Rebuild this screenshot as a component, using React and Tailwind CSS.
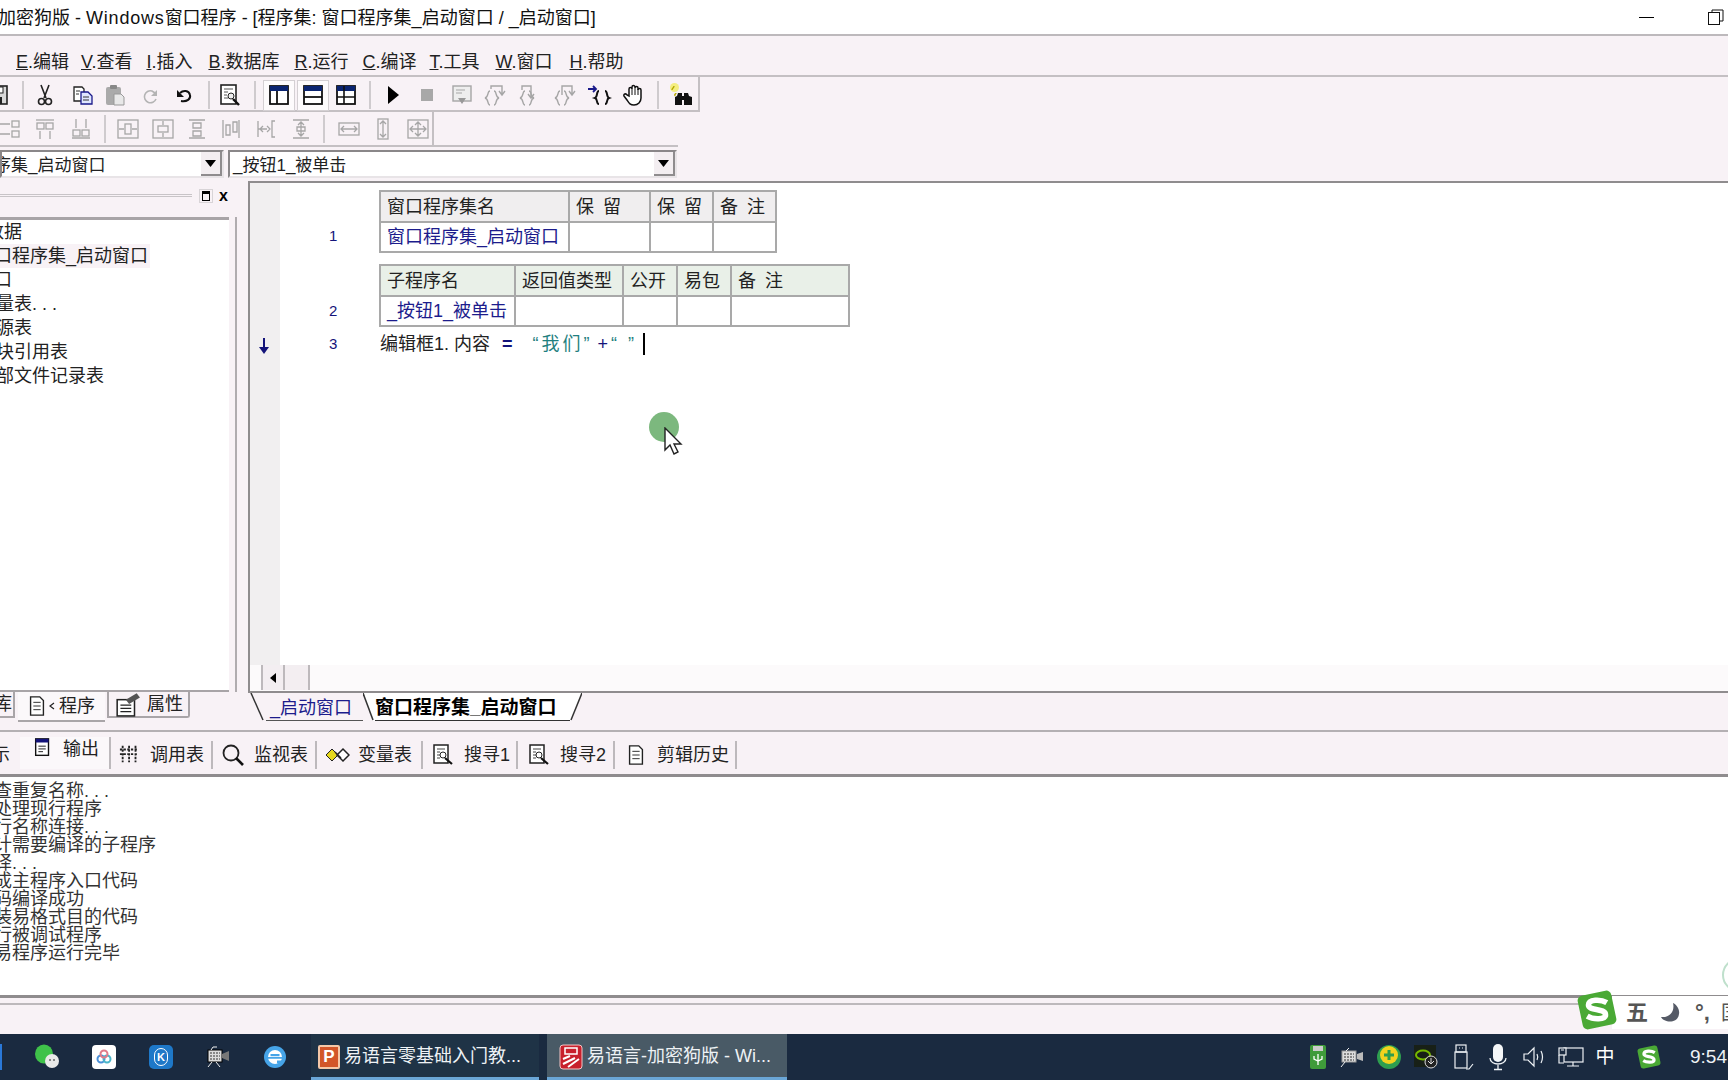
const Ico = ({ className = "", size = 24, children, vb = "0 0 24 24" }) => (
  <svg viewBox={vb} width={size} height={size} fill="none" className={`shrink-0 ${className}`}>
    {children}
  </svg>
);

const GRAY = "#a6a6a6";

// main toolbar drawings
const SaveIcon = ({ className }) => (
  <Ico className={className}>
    <rect x="3" y="3" width="18" height="18" fill="#d8d8d8" stroke="#222" strokeWidth="1.6" />
    <rect x="7" y="4" width="10" height="6" fill="#fff" stroke="#222" />
    <rect x="8" y="14" width="8" height="7" fill="#222" />
  </Ico>
);
const ScissorsIcon = ({ className }) => (
  <Ico className={className}>
    <path d="M8 2l5 13M16 2l-5 13" stroke="#222" strokeWidth="1.6" />
    <circle cx="8.500" cy="18.500" r="3" stroke="#222" strokeWidth="1.6" />
    <circle cx="15.500" cy="18.500" r="3" stroke="#222" strokeWidth="1.6" />
  </Ico>
);
const CopyIcon = ({ className }) => (
  <Ico className={className}>
    <path d="M3 4h8l2 2v12H3z" fill="#fff" stroke="#222" strokeWidth="1.3" />
    <path d="M10 9h7l4 4v8H10z" fill="#dfe6ff" stroke="#1a1a8a" strokeWidth="1.3" />
    <path d="M12 14h6M12 17h6M5 8h4M5 11h3" stroke="#333" />
  </Ico>
);
const PasteIcon = ({ className }) => (
  <Ico className={className}>
    <rect x="3" y="4" width="15" height="18" rx="2" fill="#aaa" />
    <rect x="7" y="2" width="7" height="4" rx="1" fill="#888" />
    <path d="M11 11h7l3 3v8H11z" fill="#e8e8e8" stroke="#999" />
  </Ico>
);
const RedoIcon = ({ className }) => (
  <Ico className={className}>
    <path d="M18 16a6 6 0 1 1-4-8l3 2" stroke="#b4b4b4" strokeWidth="1.6" />
    <path d="M19 7v6h-6z" fill="#b4b4b4" />
  </Ico>
);
const UndoIcon = ({ className }) => (
  <Ico className={className}>
    <path d="M9 18c6 1 10-2 9-6-1-5-7-5-10-2" stroke="#111" strokeWidth="2" />
    <path d="M5 7v7h7z" fill="#111" />
  </Ico>
);
const FindIcon = ({ className }) => (
  <Ico className={className}>
    <rect x="3" y="2" width="15" height="19" fill="#fff" stroke="#222" strokeWidth="1.6" />
    <path d="M6 6h9M6 9h4M6 12h3M6 15h4" stroke="#555" />
    <circle cx="13" cy="13" r="3" stroke="#222" fill="#eee" />
    <path d="M15 16l6 6" stroke="#111" strokeWidth="2.4" />
  </Ico>
);
const Layout = ({ kind }) => (
  <Ico>
    <rect x="3" y="3" width="18" height="18" fill="#fff" stroke="#111" strokeWidth="1.8" />
    <rect x="3" y="3" width="18" height="5" fill="#0a2470" />
    {kind === 0 && <path d="M10 8v13" stroke="#111" strokeWidth="1.8" />}
    {kind === 1 && <path d="M3 14h18" stroke="#111" strokeWidth="1.8" />}
    {kind === 2 && <path d="M10 3v18M10 14h11M3 14h7" stroke="#111" strokeWidth="1.6" />}
  </Ico>
);
const PlayIcon = ({ className }) => (
  <Ico className={className}>
    <path d="M7 3l11 9-11 9z" fill="#000" />
  </Ico>
);
const StopIcon = ({ className }) => (
  <Ico className={className}>
    <rect x="6" y="6" width="12" height="12" fill="#a8a8a8" />
  </Ico>
);
const CompileIcon = ({ className }) => (
  <Ico className={className}>
    <rect x="3" y="3" width="18" height="15" fill="#eee" stroke={GRAY} strokeWidth="1.4" />
    <path d="M6 7h9M6 10h6" stroke={GRAY} />
    <path d="M8 15h8l-4 6z" fill="#999" />
  </Ico>
);
const Brace = ({ className, d, color = GRAY, sw = 1.4 }) => (
  <Ico className={className}>
    <path d="M7 8C4 8 6 14 2 15c4 1 2 7 5 7M11 8c3 0 1 6 5 7-4 1-2 7-5 7" stroke={color} strokeWidth={sw} />
    <path d={d} stroke={color} strokeWidth={sw} />
  </Ico>
);
const StepInIcon = ({ className }) => (
  <Ico className={className}>
    <path d="M11 8c-3 0-1 6-4 7 3 1 1 6 4 6M17 8c3 0 1 6 4 7-3 1-1 6-4 6" stroke="#111" strokeWidth="2" />
    <path d="M0 6h8M5 3l3 3-3 3" stroke="#1a1a8a" strokeWidth="1.8" />
  </Ico>
);
const HandIcon = ({ className }) => (
  <Ico className={className}>
    <path d="M7 13V6a1.400 1.400 0 0 1 3 0V4a1.400 1.400 0 0 1 3 0v1a1.400 1.400 0 0 1 3 0v2a1.400 1.400 0 0 1 3 0v8c0 4-3 7-7 7s-5-2-7-5l-3-4c-1-2 2-3 3-1z" fill="#fff" stroke="#111" strokeWidth="1.5" />
    <path d="M10 6v6M13 5v7M16 6v6" stroke="#111" />
  </Ico>
);
const BinocIcon = ({ className }) => (
  <Ico className={className}>
    <rect x="0" y="0" width="9" height="9" rx="4.500" fill="#f4ee80" />
    <path d="M2 7c0-2 2-2 2-4M5 13c-1-2 1-2 1-3" stroke="#b5a800" strokeWidth="1.4" />
    <path d="M8 10h4v3h2v-3h4l1 3 3 1v8h-8v-5h-2v5H5v-8l2-1z" fill="#111" />
  </Ico>
);

// layout toolbar, all disabled
const AlignIcon = ({ className, children }) => (
  <Ico className={className}>
    <g stroke={GRAY} strokeWidth="1.3">{children}</g>
  </Ico>
);
const AlignA = ({ className }) => (
  <AlignIcon className={className}>
    <rect x="15" y="4" width="7" height="6" />
    <rect x="15" y="14" width="7" height="6" />
    <path d="M2 7h11M2 17h11" />
  </AlignIcon>
);
const AlignB = ({ className }) => (
  <AlignIcon className={className}>
    <path d="M3 3h18" />
    <rect x="4" y="6" width="7" height="6" />
    <rect x="13" y="6" width="7" height="6" />
    <path d="M7 22V14M17 22V14" />
  </AlignIcon>
);
const AlignC = ({ className }) => (
  <AlignIcon className={className}>
    <path d="M3 21h18M7 2v9M17 2v9" />
    <rect x="4" y="13" width="7" height="6" />
    <rect x="13" y="13" width="7" height="6" />
  </AlignIcon>
);
const CenterA = ({ className }) => (
  <AlignIcon className={className}>
    <rect x="2" y="3" width="20" height="18" />
    <rect x="9" y="7" width="6" height="10" />
    <path d="M3 12h5M16 12h5" />
  </AlignIcon>
);
const CenterB = ({ className }) => (
  <AlignIcon className={className}>
    <rect x="2" y="3" width="20" height="18" />
    <rect x="7" y="9" width="10" height="6" />
    <path d="M12 4v4M12 16v4" />
  </AlignIcon>
);
const EvenA = ({ className }) => (
  <AlignIcon className={className}>
    <path d="M4 3h16M8 6h8v5H8zM4 21h16M8 14h8v5H8z" />
  </AlignIcon>
);
const EvenB = ({ className }) => (
  <AlignIcon className={className}>
    <path d="M4 3v18M20 3v18M7 8h4v10H7zM14 5h4v10h-4z" />
  </AlignIcon>
);
const EvenC = ({ className }) => (
  <AlignIcon className={className}>
    <path d="M3 4v16M3 12h9M8 9l-3 3 3 3M12 9l3 3-3 3M20 4h-3v16h3" />
  </AlignIcon>
);
const EvenD = ({ className }) => (
  <AlignIcon className={className}>
    <path d="M4 3h16M4 21h16M12 5v14M9 8l3-3 3 3M9 16l3 3 3-3M8 10h8v4H8z" />
  </AlignIcon>
);
const SizeA = ({ className }) => (
  <AlignIcon className={className}>
    <rect x="2" y="6" width="20" height="12" />
    <path d="M4 12h16M7 9l-3 3 3 3M17 9l3 3-3 3" />
  </AlignIcon>
);
const SizeB = ({ className }) => (
  <AlignIcon className={className}>
    <rect x="7" y="2" width="10" height="20" />
    <path d="M12 4v16M9 7l3-3 3 3M9 17l3 3 3-3" />
  </AlignIcon>
);
const SizeC = ({ className }) => (
  <AlignIcon className={className}>
    <rect x="2" y="3" width="20" height="18" />
    <path d="M4 12h16M12 5v14M9 8l3-3 3 3M9 16l3 3 3-3M7 9l-3 3 3 3M17 9l3 3-3 3" />
  </AlignIcon>
);

const Sep = ({ className = "" }) => <div className={`h-[28px] w-[2px] shrink-0 bg-[#cfcbce] ${className}`} />;

const Pressed = ({ className = "", children }) => (
  <div className={`flex h-[31px] w-[32px] shrink-0 items-center justify-center border border-[#d4d0d3] bg-[#fdfbfc] ${className}`}>
    {children}
  </div>
);

const menus = [
  ["E", ".编辑", "ml-[16px]"],
  ["V", ".查看", "ml-[12px]"],
  ["I", ".插入", "ml-[14px]"],
  ["B", ".数据库", "ml-[16px]"],
  ["R", ".运行", "ml-[15px]"],
  ["C", ".编译", "ml-[14px]"],
  ["T", ".工具", "ml-[13px]"],
  ["W", ".窗口", "ml-[16px]"],
  ["H", ".帮助", "ml-[17px]"],
];

const Arrow = () => (
  <div className="flex h-full w-[21px] items-center justify-center border-r-2 border-b-2 border-[#8f8c8e] bg-[#f3eef1]">
    <svg width="11" height="7" viewBox="0 0 11 7">
      <path d="M0 0h11L5.500 7z" fill="#000" />
    </svg>
  </div>
);

const Combo = ({ className, children }) => (
  <div className={`flex h-[28px] items-stretch overflow-hidden border-2 border-t-[#8a8789] border-l-[#8a8789] border-r-[#e8e4e7] border-b-[#e8e4e7] bg-white ${className}`}>
    {children}
    <Arrow />
  </div>
);

const treeRows = [
  { text: "程序数据", cls: "-ml-[50px]" },
  { text: "窗口程序集_启动窗口", cls: "-ml-[24px] bg-[#f8f2f6] pr-[2px]" },
  { text: "窗口", cls: "-ml-[24px]" },
  { text: "常量表. . .", cls: "-ml-[22px]" },
  { text: "资源表", cls: "-ml-[22px]" },
  { text: "模块引用表", cls: "-ml-[22px]" },
  { text: "外部文件记录表", cls: "-ml-[22px]" },
];

const outputLines = [
  "正在检查重复名称. . .",
  "正在预处理现行程序",
  "正在进行名称连接. . .",
  "正在统计需要编译的子程序",
  "正在编译. . .",
  "正在生成主程序入口代码",
  "程序代码编译成功",
  "正在封装易格式目的代码",
  "开始运行被调试程序",
  "被调试易程序运行完毕",
];

const Cell = ({ children, className = "" }) => (
  <td className={`border-2 border-[#a9a9a9] pl-[6px] text-[18px] leading-none whitespace-nowrap ${className}`}>{children}</td>
);

const SmallDoc = () => (
  <Ico size={22}>
    <path d="M5 2h10l4 4v16H5z" fill="#fff" stroke="#222" strokeWidth="1.5" />
    <path d="M8 8h8M8 12h8M8 16h8" stroke="#222" />
  </Ico>
);

const OutTab = ({ icon, label, className, textClass = "ml-[10px]" }) => (
  <div className={`flex h-[28px] shrink-0 items-center border-r-2 border-[#bdb9bc] text-[18px] whitespace-nowrap ${className}`}>
    {icon}
    <span className={textClass}>{label}</span>
  </div>
);

const SmallFind = () => (
  <Ico size={24}>
    <rect x="2" y="2" width="14" height="18" fill="#fff" stroke="#222" strokeWidth="1.5" />
    <path d="M5 6h8M5 9h3M5 12h3M5 15h3" stroke="#444" />
    <circle cx="11" cy="12" r="3" stroke="#222" />
    <path d="M13 15l7 6" stroke="#111" strokeWidth="2.2" />
  </Ico>
);

const SogouS = ({ size = 36, className = "" }) => (
  <svg viewBox="0 0 36 36" width={size} height={size} className={`shrink-0 ${className}`}>
    <rect x="4" y="4" width="28" height="28" rx="4" fill="#4aa935" transform="rotate(-12 18 18)" />
    <path d="M26 12c-5-3-15-3-15 2 0 5 14 2 14 8 0 4-10 4-15 1" fill="none" stroke="#fff" strokeWidth="4.500" />
  </svg>
);

const Tray = ({ className = "", children }) => (
  <div className={`flex w-[34px] shrink-0 items-center justify-center ${className}`}>{children}</div>
);

export default function App() {
  return (
    <div className="relative flex h-[1080px] w-[1728px] flex-col overflow-hidden bg-[#f8f2f6] font-['Liberation_Sans','Noto_Sans_CJK_SC',sans-serif] text-[#222]">
      {/* title bar */}
      <div className="flex h-[36px] shrink-0 items-center justify-between border-b-2 border-[#bdb9bc] bg-white">
        <span className="-ml-[2px] pt-[2px] text-[18px] text-[#111] whitespace-nowrap">
          加密狗版 - <span className="tracking-[0.8px]">Windows</span>窗口程序 - [程序集: 窗口程序集_启动窗口 / _启动窗口]
        </span>
        <div className="flex items-center pr-[4px]">
          <div className="h-[1px] w-[15px] bg-black" />
          <svg width="16" height="16" viewBox="0 0 16 16" className="ml-[54px]">
            <path d="M4 3V1h11v11h-3" fill="none" stroke="#111" />
            <rect x="0.500" y="3.500" width="11" height="12" fill="#fff" stroke="#111" />
          </svg>
        </div>
      </div>

      {/* menu */}
      <div className="flex h-[41px] shrink-0 items-center border-b-2 border-[#c4c0c3] pt-[13px] text-[18px] whitespace-nowrap">
        {menus.map(([key, rest, cls]) => (
          <span key={key} className={cls}>
            <span className="underline">{key}</span>
            {rest}
          </span>
        ))}
      </div>

      {/* toolbar 1 */}
      <div className="flex h-[35px] w-[700px] shrink-0 items-center border-r-2 border-b-2 border-[#c4c0c3] pt-[3px]">
        <SaveIcon className="-ml-[14px]" />
        <Sep className="ml-[12px]" />
        <ScissorsIcon className="ml-[9px]" />
        <CopyIcon className="ml-[14px]" />
        <PasteIcon className="ml-[8px]" />
        <RedoIcon className="ml-[11px]" />
        <UndoIcon className="ml-[10px]" />
        <Sep className="ml-[12px]" />
        <FindIcon className="ml-[8px]" />
        <Sep className="ml-[12px]" />
        <Pressed className="ml-[7px]"><Layout kind={0} /></Pressed>
        <Pressed className="ml-[2px]"><Layout kind={1} /></Pressed>
        <div className="ml-[5px]"><Layout kind={2} /></div>
        <Sep className="ml-[11px]" />
        <PlayIcon className="ml-[10px]" />
        <StopIcon className="ml-[10px]" />
        <CompileIcon className="ml-[11px]" />
        <Brace className="ml-[9px]" d="M8 6V3h11v8M16 8l3 4 3-4" />
        <Brace className="ml-[11px]" d="M4 7V3h9v12M10 11l3 4 3-4" />
        <Brace className="ml-[11px]" d="M9 12V3h10v8M16 8l3 4 3-4" />
        <StepInIcon className="ml-[11px]" />
        <HandIcon className="ml-[10px]" />
        <Sep className="ml-[11px]" />
        <BinocIcon className="ml-[11px]" />
      </div>

      {/* toolbar 2 */}
      <div className="flex h-[35px] w-[678px] shrink-0 items-stretch border-b-2 border-[#c4c0c3]">
        <div className="flex w-[434px] items-center border-r-2 border-[#c4c0c3] pt-[1px]">
          <AlignA className="-ml-[3px]" />
          <AlignB className="ml-[12px]" />
          <AlignC className="ml-[12px]" />
          <Sep className="ml-[11px]" />
          <CenterA className="ml-[10px]" />
          <CenterB className="ml-[11px]" />
          <EvenA className="ml-[10px]" />
          <EvenB className="ml-[10px]" />
          <EvenC className="ml-[12px]" />
          <EvenD className="ml-[10px]" />
          <Sep className="ml-[10px]" />
          <SizeA className="ml-[12px]" />
          <SizeB className="ml-[10px]" />
          <SizeC className="ml-[11px]" />
        </div>
      </div>

      {/* combos */}
      <div className="flex h-[34px] shrink-0 items-start pt-[3px] text-[17px] whitespace-nowrap">
        <Combo className="w-[224px]">
          <div className="flex-1 overflow-hidden pt-[2px] leading-[24px]">
            <span className="-ml-[25px] block">程序集_启动窗口</span>
          </div>
        </Combo>
        <Combo className="ml-[4px] w-[449px]">
          <div className="flex-1 pt-[2px] pl-[3px] leading-[24px]">_按钮1_被单击</div>
        </Combo>
      </div>

      {/* main */}
      <div className="flex h-[551px] shrink-0 border-b-2 border-[#b4b0b3]">
        {/* left panel */}
        <div className="flex w-[248px] shrink-0 flex-col">
          <div className="flex h-[36px] w-[236px] shrink-0 items-start pt-[8px]">
            <div className="mt-[5px] h-[3px] w-[192px] border-t border-b border-[#c8c4c7]" />
            <div className="ml-[7px] flex h-[14px] w-[14px] items-center justify-center border border-[#d8d4d7]">
              <div className="h-[10px] w-[8px] border border-t-[3px] border-black" />
            </div>
            <span className="ml-[6px] text-[16px] leading-[14px] font-bold text-black">x</span>
          </div>
          <div className="h-[475px] w-[237px] shrink-0 overflow-hidden border-r-[2px] border-[#b0acaf] pr-[6px]">
            <div className="h-full border-t-[3px] border-b-2 border-[#a8a4a7] bg-white text-[18px] whitespace-nowrap">
              {treeRows.map((row) => (
                <div key={row.text} className="h-[24px] leading-[24px]">
                  <span className={`inline-block ${row.cls}`}>{row.text}</span>
                </div>
              ))}
            </div>
          </div>
          <div className="flex items-start text-[18px] whitespace-nowrap">
            <div className="flex h-[26px] w-[15px] items-center overflow-hidden border-r-2 border-b-2 border-[#a9a5a8]">
              <span className="-ml-[6px] shrink-0">库</span>
            </div>
            <div className="ml-[3px] flex h-[30px] w-[87px] items-center border-b-2 border-[#a9a5a8] bg-[#fbf8fa] pl-[8px]">
              <SmallDoc />
              <svg width="8" height="8" viewBox="0 0 8 8" className="shrink-0">
                <path d="M6 1L2 4l4 3" fill="none" stroke="#222" strokeWidth="1.200" />
              </svg>
              <span className="ml-[3px]">程序</span>
            </div>
            <div className="ml-[2px] flex h-[26px] w-[83px] items-center rounded-br-[3px] border-r-2 border-b-2 border-l-2 border-[#a9a5a8] pl-[6px]">
              <Ico size={26}>
                <rect x="2" y="8" width="16" height="15" fill="#fff" stroke="#222" strokeWidth="1.4" />
                <path d="M5 13h10M5 16h10M5 19h10" stroke="#222" />
                <path d="M10 8l10-6 3 4-10 6z" fill="#555" />
              </Ico>
              <span className="ml-[6px]">属性</span>
            </div>
          </div>
        </div>

        {/* editor side */}
        <div className="flex min-w-0 flex-1 flex-col">
          <div className="flex h-[484px] shrink-0 border-t-2 border-l-2 border-[#8f8c8e] bg-white">
            <div className="w-[30px] shrink-0 bg-[#f1eff0] pt-[155px] pl-[8px]">
              <svg width="12" height="16" viewBox="0 0 12 16">
                <path d="M6 0v12" stroke="#14147a" strokeWidth="2" />
                <path d="M1 9h10l-5 7z" fill="#14147a" />
              </svg>
            </div>
            <div className="flex min-w-0 flex-1 flex-col pt-[7px] text-[18px]">
              <div className="flex">
                <div className="w-[99px] shrink-0 pt-[34px] pl-[49px] text-[15px] leading-[24px] text-[#14147a]">1</div>
                <table className="w-[396px] table-fixed">
                  <colgroup>
                    <col className="w-[189px]" />
                    <col className="w-[81px]" />
                    <col className="w-[63px]" />
                    <col className="w-[63px]" />
                  </colgroup>
                  <tbody>
                    <tr className="h-[31px] bg-[#f0eeef]">
                      <Cell>窗口程序集名</Cell>
                      <Cell className="[word-spacing:4px]">保 留</Cell>
                      <Cell className="[word-spacing:4px]">保 留</Cell>
                      <Cell className="[word-spacing:4px]">备 注</Cell>
                    </tr>
                    <tr className="h-[30px]">
                      <Cell className="text-[#1c1c8c]">窗口程序集_启动窗口</Cell>
                      <Cell />
                      <Cell />
                      <Cell />
                    </tr>
                  </tbody>
                </table>
              </div>
              <div className="mt-[11px] flex">
                <div className="w-[99px] shrink-0 pt-[35px] pl-[49px] text-[15px] leading-[24px] text-[#14147a]">2</div>
                <table className="w-[469px] table-fixed">
                  <colgroup>
                    <col className="w-[135px]" />
                    <col className="w-[108px]" />
                    <col className="w-[54px]" />
                    <col className="w-[54px]" />
                    <col className="w-[118px]" />
                  </colgroup>
                  <tbody>
                    <tr className="h-[31px] bg-[#e9f0e8]">
                      <Cell>子程序名</Cell>
                      <Cell>返回值类型</Cell>
                      <Cell>公开</Cell>
                      <Cell>易包</Cell>
                      <Cell className="[word-spacing:4px]">备 注</Cell>
                    </tr>
                    <tr className="h-[30px]">
                      <Cell className="text-[#1c1c8c]">_按钮1_被单击</Cell>
                      <Cell />
                      <Cell />
                      <Cell />
                      <Cell />
                    </tr>
                  </tbody>
                </table>
              </div>
              <div className="mt-[5px] flex h-[24px] items-center whitespace-nowrap">
                <div className="w-[100px] shrink-0 pl-[49px] text-[15px] text-[#14147a]">3</div>
                <span>编辑框1. 内容</span>
                <span className="ml-[12px] font-bold text-[#14147a]">=</span>
                <span className="ml-[20px] tracking-[3px] text-[#1f8080]">“我们”</span>
                <span className="ml-[5px] text-[#14147a]">+</span>
                <span className="ml-[3px] tracking-[3px] text-[#1f8080]">“ ”</span>
                <div className="ml-[6px] h-[22px] w-[2px] bg-black" />
              </div>
            </div>
          </div>
          <div className="flex h-[28px] shrink-0 border-l-2 border-b-2 border-[#8f8c8e] bg-[#fcfafb] pl-[11px]">
            <div className="flex h-[25px] w-[24px] items-center justify-center border-r-2 border-l-2 border-[#bdb9bc] bg-[#f3eef1]">
              <svg width="6" height="10" viewBox="0 0 6 10">
                <path d="M6 0v10L0 5z" fill="#000" />
              </svg>
            </div>
            <div className="h-[25px] w-[25px] border-r-2 border-[#bdb9bc] bg-[#f3eef1]" />
          </div>
          <div className="flex h-[28px] shrink-0 items-stretch text-[18px] whitespace-nowrap">
            <svg width="18" height="28" viewBox="0 0 18 28" className="shrink-0">
              <path d="M3 0l12 27" stroke="#333" strokeWidth="1.500" fill="none" />
            </svg>
            <div className="flex w-[97px] shrink-0 items-center border-b border-[#555] pt-[4px] pl-[4px] text-[#1c1c8c]">_启动窗口</div>
            <svg width="12" height="28" viewBox="0 0 12 28" className="shrink-0">
              <path d="M0 0h12v28H10z" fill="#fff" />
              <path d="M0 0l10 27" stroke="#333" strokeWidth="1.500" fill="none" />
            </svg>
            <div className="flex w-[195px] shrink-0 items-center border-b border-[#333] bg-white pt-[4px] text-[19px] font-bold text-black">窗口程序集_启动窗口</div>
            <svg width="12" height="28" viewBox="0 0 12 28" className="shrink-0">
              <path d="M0 0h12L0 28z" fill="#fff" />
              <path d="M12 0L1 27" stroke="#333" strokeWidth="1.500" fill="none" />
            </svg>
          </div>
        </div>
      </div>

      {/* output tabs */}
      <div className="flex h-[45px] shrink-0 items-end border-b-[3px] border-[#8f8c8e] pb-[5px]">
        <div className="flex h-[28px] w-[20px] shrink-0 items-center overflow-hidden text-[18px]">
          <span className="-ml-[8px] shrink-0">示</span>
        </div>
        <div className="flex h-[32px] w-[91px] shrink-0 items-start border-r-2 border-[#bdb9bc] bg-[#fbf8fa] pl-[12px] text-[18px]">
          <Ico size={22}>
            <rect x="4" y="2" width="14" height="18" fill="#fff" stroke="#111" strokeWidth="1.5" />
            <rect x="4" y="2" width="14" height="4" fill="#14147a" />
            <path d="M7 10h8M7 13h8M7 16h5" stroke="#111" />
          </Ico>
          <span className="ml-[9px] leading-[24px]">输出</span>
        </div>
        <OutTab
          className="w-[102px] pl-[8px]"
          textClass="ml-[9px]"
          icon={
            <Ico size={22}>
              <path d="M4 2v18M11 2v18M18 2v18M1 6h20M1 11h20" stroke="#222" strokeWidth="2" strokeDasharray="2.500 1.500" />
            </Ico>
          }
          label="调用表"
        />
        <OutTab
          className="w-[104px] pl-[8px]"
          textClass="ml-[9px]"
          icon={
            <Ico size={24}>
              <circle cx="10" cy="10" r="7.500" stroke="#222" strokeWidth="1.8" />
              <path d="M15 15l7 7" stroke="#111" strokeWidth="2.6" />
            </Ico>
          }
          label="监视表"
        />
        <OutTab
          className="w-[106px] pl-[9px]"
          textClass="ml-[8px]"
          icon={
            <Ico size={24}>
              <path d="M6 6l6 6-6 6-6-6z" fill="#e6d81c" stroke="#222" />
              <path d="M17 6l6 6-6 6-6-6z" fill="#fff" stroke="#222" strokeWidth="1.5" />
              <path d="M9 9l6 6" stroke="#222" strokeWidth="1.500" />
            </Ico>
          }
          label="变量表"
        />
        <OutTab className="w-[95px] pl-[9px]" textClass="ml-[8px]" icon={<SmallFind />} label="搜寻1" />
        <OutTab className="w-[97px] pl-[10px]" textClass="ml-[8px]" icon={<SmallFind />} label="搜寻2" />
        <OutTab className="w-[122px] pl-[10px]" textClass="ml-[10px]" icon={<SmallDoc />} label="剪辑历史" />
      </div>

      {/* output */}
      <div className="h-[218px] shrink-0 overflow-hidden bg-white pt-[5px] text-[18px] leading-[18px] text-[#333] whitespace-nowrap">
        {outputLines.map((line) => (
          <div key={line} className="-ml-[60px]">{line}</div>
        ))}
      </div>

      {/* status */}
      <div className="h-[39px] shrink-0 border-t-[3px] border-[#8f8c8e] pt-[5px]">
        <div className="border-t-2 border-[#bdb9bc]" />
      </div>

      {/* taskbar */}
      <div className="flex h-[46px] flex-1 items-stretch bg-[#1a2a40] text-[18px] text-[#eef2f5] whitespace-nowrap">
        <div className="mt-[10px] mb-[10px] w-[2px] bg-[#2a78d8]" />
        <div className="flex w-[309px] items-center">
          <Tray className="ml-[28px]">
            <svg width="26" height="26" viewBox="0 0 26 26">
              <ellipse cx="10" cy="10" rx="9" ry="9.500" fill="#3fc24a" />
              <circle cx="18" cy="17" r="7" fill="#e9e9e9" />
              <circle cx="16" cy="16" r="1" fill="#666" />
              <circle cx="20" cy="16" r="1" fill="#666" />
            </svg>
          </Tray>
          <Tray className="ml-[23px]">
            <div className="flex h-[24px] w-[24px] items-center justify-center rounded-[4px] bg-white">
              <svg width="18" height="18" viewBox="0 0 18 18" fill="none">
                <circle cx="6" cy="11" r="3.500" stroke="#4a90d9" strokeWidth="2" />
                <circle cx="12" cy="11" r="3.500" stroke="#4ab5c9" strokeWidth="2" />
                <circle cx="9" cy="6" r="3.500" stroke="#e07a8a" strokeWidth="2" />
              </svg>
            </div>
          </Tray>
          <Tray className="ml-[23px]">
            <div className="flex h-[24px] w-[24px] items-center justify-center rounded-[5px] bg-[#1e78c8]">
              <div className="flex h-[18px] w-[14px] items-center justify-center rounded-full border border-white text-[11px] leading-none font-bold text-white">K</div>
            </div>
          </Tray>
          <Tray className="ml-[23px]">
            <svg width="26" height="24" viewBox="0 0 26 24">
              <rect x="3" y="5" width="14" height="12" fill="#ddd" stroke="#000" />
              <path d="M5 8h10M5 11h10M5 14h10" stroke="#333" strokeDasharray="2 1" />
              <path d="M17 9l7-3v10l-7-3z" fill="#777" />
              <path d="M7 17l-4 5M11 17l4 5M6 5l2-3h4" stroke="#eee" fill="none" />
            </svg>
          </Tray>
          <Tray className="ml-[23px]">
            <svg width="26" height="26" viewBox="0 0 26 26">
              <circle cx="13" cy="13" r="11" fill="#46a4e8" />
              <circle cx="13" cy="13" r="7" fill="#fff" />
              <rect x="8.500" y="10" width="9" height="2.200" fill="#46a4e8" />
              <path d="M6 13h14v1.800H6zM15 16.500h6v3h-6z" fill="#46a4e8" />
            </svg>
          </Tray>
        </div>
        <div className="flex w-[228px] shrink-0 items-center border-b-[3px] border-[#6aa6d6] bg-[#1f3346] pt-[2px] pl-[7px]">
          <div className="flex h-[24px] w-[22px] shrink-0 items-center justify-center rounded-[2px] border-2 border-[#f5c8a8] bg-[#d2562a] text-[17px] leading-none font-bold text-white">P</div>
          <span className="ml-[4px]">易语言零基础入门教...</span>
        </div>
        <div className="ml-[8px] flex w-[240px] shrink-0 items-center border-b-[3px] border-[#6aa6d6] bg-[#495a66] pt-[2px] pl-[12px]">
          <svg width="24" height="26" viewBox="0 0 24 26" className="shrink-0">
            <rect x="1" y="1" width="22" height="24" rx="3" fill="#c8202c" stroke="#f2c4c4" />
            <rect x="6" y="4" width="12" height="6" fill="none" stroke="#fff" strokeWidth="1.500" />
            <path d="M4 15l7-3M4 20l12-6M9 23l11-8" stroke="#fff" strokeWidth="2" />
          </svg>
          <span className="ml-[4px]">易语言-加密狗版 - Wi...</span>
        </div>
        <div className="flex flex-1 items-center pl-[514px]">
          <Tray>
            <svg width="16" height="24" viewBox="0 0 16 24">
              <rect x="0" y="0" width="16" height="24" rx="2" fill="#3f9b3a" />
              <rect x="3" y="1" width="10" height="5" fill="#ccc" />
              <path d="M8 9v11M4 11v3l4 2 4-2v-3" stroke="#fff" fill="none" strokeWidth="1.300" />
            </svg>
          </Tray>
          <Tray>
            <svg width="26" height="24" viewBox="0 0 26 24">
              <rect x="3" y="6" width="14" height="11" fill="#ddd" stroke="#999" />
              <path d="M5 9h10M5 12h10M5 15h10" stroke="#333" strokeDasharray="2 1" />
              <path d="M18 9l6-2v9l-6-2z" fill="#bbb" />
              <path d="M6 17l-4 5M10 3l-3 3" stroke="#eee" fill="none" />
            </svg>
          </Tray>
          <Tray className="ml-[3px]">
            <svg width="24" height="24" viewBox="0 0 24 24">
              <circle cx="12" cy="12" r="12" fill="#2e9e4f" />
              <circle cx="12" cy="10" r="9" fill="#f2d21e" />
              <path d="M12 5v10M7 10h10" stroke="#2e9e4f" strokeWidth="3" />
            </svg>
          </Tray>
          <Tray className="ml-[3px]">
            <svg width="24" height="24" viewBox="0 0 24 24">
              <rect x="0" y="0" width="22" height="22" fill="#182017" />
              <ellipse cx="9" cy="10" rx="7" ry="4.500" fill="none" stroke="#76b900" strokeWidth="2" />
              <circle cx="17" cy="17" r="6" fill="#222" stroke="#ddd" />
              <path d="M17 13v5M14 16l3 3 3-3" stroke="#ddd" fill="none" />
            </svg>
          </Tray>
          <Tray className="ml-[4px]">
            <svg width="20" height="26" viewBox="0 0 20 26" fill="none" stroke="#eef2f5" strokeWidth="1.200">
              <rect x="1" y="8" width="12" height="16" />
              <rect x="2" y="1" width="10" height="7" />
              <path d="M5 4h1M8 4h1M12 25l3 0 4-5" />
            </svg>
          </Tray>
          <Tray>
            <svg width="18" height="28" viewBox="0 0 18 28" fill="none">
              <rect x="4" y="1" width="10" height="18" rx="5" fill="#f4f6f8" />
              <path d="M1 15c0 8 16 8 16 0M9 22v4M5 26.500h8" stroke="#eef2f5" strokeWidth="1.300" />
            </svg>
          </Tray>
          <Tray className="ml-[2px]">
            <svg width="24" height="22" viewBox="0 0 24 22" fill="none" stroke="#eef2f5" strokeWidth="1.200">
              <path d="M2 8h4l6-6v18l-6-6H2z" />
              <path d="M15 8c1 2 1 4 0 6M19 5c2 4 2 8 0 12" />
            </svg>
          </Tray>
          <Tray className="ml-[3px]">
            <svg width="26" height="22" viewBox="0 0 26 22" fill="none" stroke="#eef2f5" strokeWidth="1.200">
              <rect x="6" y="2" width="19" height="14" />
              <rect x="1" y="2" width="7" height="7" fill="#1a2a40" />
              <path d="M3 4h3M15 16v4M9 20h12M1 9v8h5" />
            </svg>
          </Tray>
          <Tray className="text-[19px] text-white">中</Tray>
          <Tray className="ml-[10px]">
            <SogouS size={26} />
          </Tray>
          <span className="ml-[24px] shrink-0 text-[19px]">9:54</span>
        </div>
      </div>

      {/* click marker and mouse pointer over the editor */}
      <div className="absolute top-[412px] left-[649px] h-[30px] w-[30px] rounded-full bg-[#7cb87e]" />
      <svg width="20" height="28" viewBox="0 0 20 28" className="absolute top-[427px] left-[664px]">
        <path d="M1 1v22l5-5 4 9 4-2-4-8h7z" fill="#fff" stroke="#222" strokeWidth="1.400" />
      </svg>

      {/* floating input method bar */}
      <div className="absolute top-[996px] left-[1612px] flex h-[33px] w-[116px] items-center overflow-hidden bg-white text-[#555]">
        <span className="ml-[14px] text-[22px] font-bold">五</span>
        <svg width="22" height="22" viewBox="0 0 22 22" className="ml-[11px] shrink-0">
          <path d="M14 1c2 8-3 15-12 14 3 6 17 7 18-3 1-5-3-10-6-11z" fill="#555a66" />
        </svg>
        <span className="ml-[14px] text-[22px] leading-none font-bold">°,</span>
        <span className="ml-[11px] shrink-0 text-[20px]">囯</span>
      </div>
      <SogouS size={44} className="absolute top-[988px] left-[1575px]" />
      <div className="absolute top-[958px] left-[1722px] h-[34px] w-[34px] rounded-full border-2 border-[#bfe0cc] bg-white" />
    </div>
  );
}
